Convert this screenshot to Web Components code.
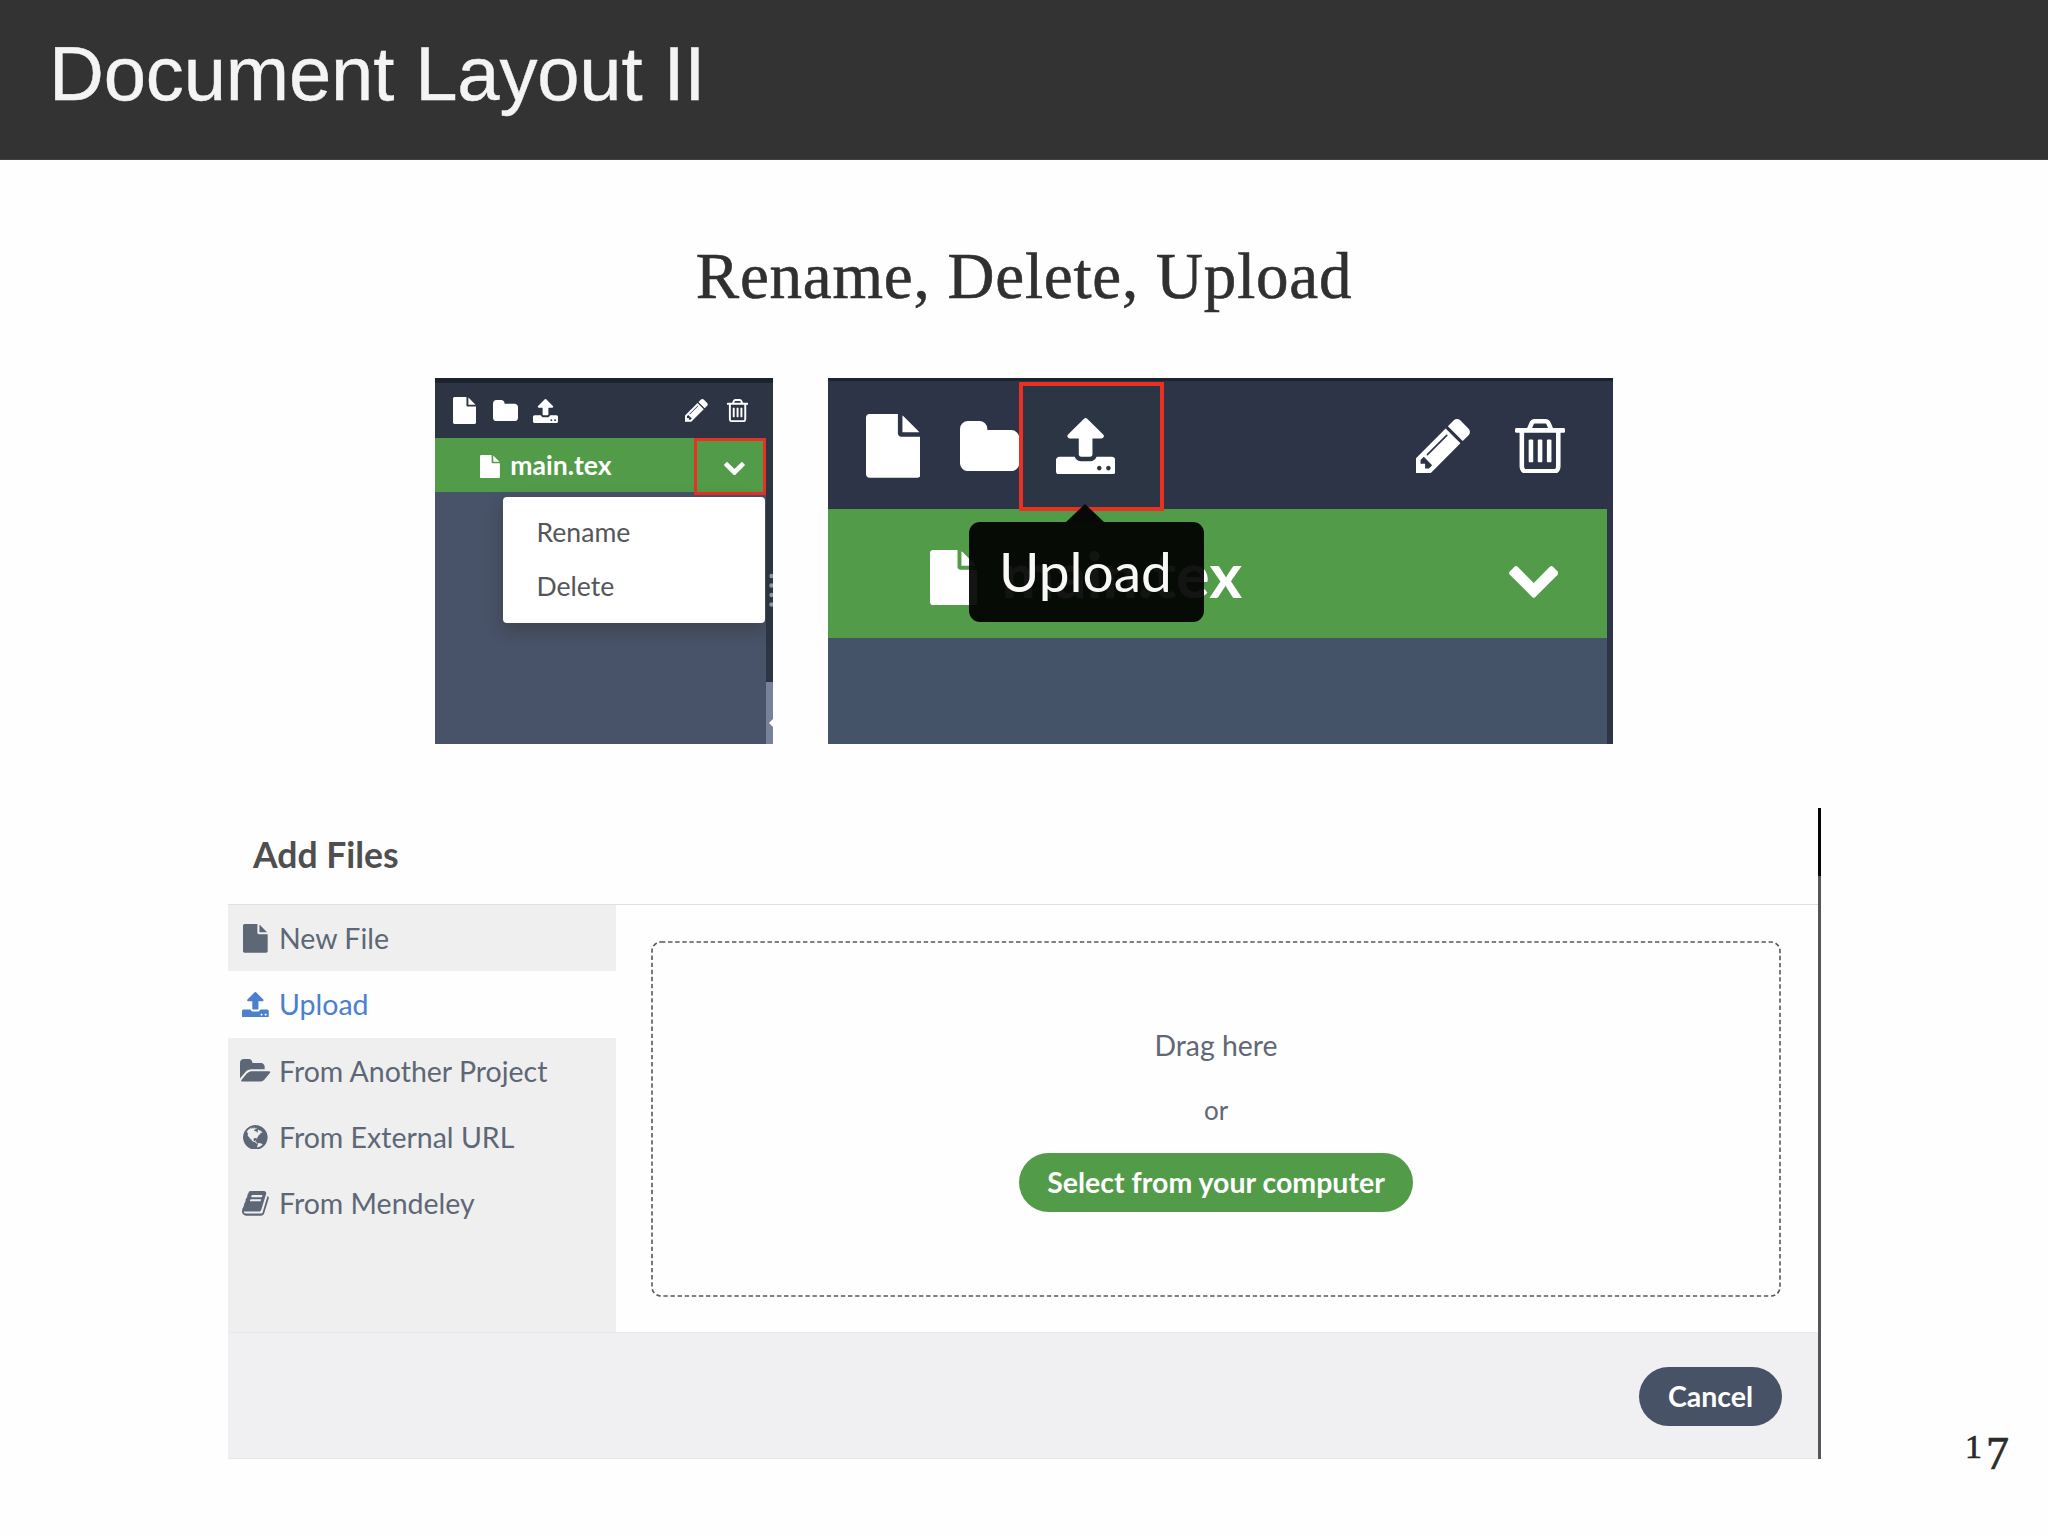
<!DOCTYPE html>
<html lang="en">
<head>
<meta charset="utf-8">
<title>Document Layout II</title>
<style>
  body {
    margin: 0;
    background: #fefefe;
  }
</style>
</head>
<body>
<lecture-slide page="17">
  <span slot="title">Document Layout II</span>
  <span slot="subtitle">Rename, Delete, Upload</span>

  <file-tree slot="figures" class="small" filename="main.tex">
    <context-menu slot="menu">
      <span>Rename</span>
      <span>Delete</span>
    </context-menu>
  </file-tree>
  <file-tree slot="figures" class="large" filename="main.tex">
    <tool-tip slot="tip">Upload</tool-tip>
  </file-tree>

  <add-files-dialog slot="dialog" heading="Add Files">
    <source-item slot="source" icon="file">New File</source-item>
    <source-item slot="source" icon="upload" active>Upload</source-item>
    <source-item slot="source" icon="folder-open">From Another Project</source-item>
    <source-item slot="source" icon="globe">From External URL</source-item>
    <source-item slot="source" icon="book">From Mendeley</source-item>
    <drop-zone></drop-zone>
    <pill-button slot="actions" class="cancel">Cancel</pill-button>
  </add-files-dialog>
</lecture-slide>

<script>
// Each icon is [viewBox, path], the viewBox being the tight box of the glyph
const ICONS = {
  'file': ['128 0 1536 1792', 'M1152 512v-472q22 14 36 28l408 408q14 14 28 36h-472zm-128 32q0 40 28 68t68 28h544v1056q0 40-28 68t-68 28h-1344q-40 0-68-28t-28-68v-1600q0-40 28-68t68-28h800v544z'],
  'folder': ['64 128 1664 1408', 'M1728 608v704q0 92-66 158t-158 66h-1216q-92 0-158-66t-66-158v-960q0-92 66-158t158-66h320q92 0 158 66t66 158v32h672q92 0 158 66t66 158z'],
  'folder-open': ['0 128 1879 1408', 'M1879 952q0 31-31 66l-336 396q-43 51-120.5 86.5t-143.5 35.5h-1088q-34 0-60.5-13t-26.5-43q0-31 31-66l336-396q43-51 120.5-86.5t143.5-35.5h1088q34 0 60.5 13t26.5 43zm-343-344v160h-832q-94 0-197 47.5t-164 119.5l-337 396-5 6q0-4-.5-12.5t-.5-12.5v-960q0-92 66-158t158-66h320q92 0 158 66t66 158v32h544q92 0 158 66t66 158z'],
  'upload': ['64 64 1664 1600', 'M1344 1472q0-26-19-45t-45-19-45 19-19 45 19 45 45 19 45-19 19-45zm256 0q0-26-19-45t-45-19-45 19-19 45 19 45 45 19 45-19 19-45zm128-224v320q0 40-28 68t-68 28h-1472q-40 0-68-28t-28-68v-320q0-40 28-68t68-28h427q21 56 70.5 92t110.5 36h256q61 0 110.5-36t70.5-92h427q40 0 68 28t28 68zm-325-648q-17 40-59 40h-256v448q0 26-19 45t-45 19h-256q-26 0-45-19t-19-45v-448h-256q-42 0-59-40-17-39 14-69l448-448q18-19 45-19t45 19l448 448q31 30 14 69z'],
  'pencil': ['128 149 1515 1515', 'M491 1536l91-91-235-235-91 91v107h128v128h107zm523-928q0-22-22-22-10 0-17 7l-542 542q-7 7-7 17 0 22 22 22 10 0 17-7l542-542q7-7 7-17zm-54-192l416 416-832 832h-416v-416zm683 96q0 53-37 90l-166 166-416-416 166-165q36-38 90-38 53 0 91 38l235 234q37 39 37 91z'],
  'trash': ['192 128 1408 1536', 'M704 736v576q0 14-9 23t-23 9h-64q-14 0-23-9t-9-23v-576q0-14 9-23t23-9h64q14 0 23 9t9 23zm256 0v576q0 14-9 23t-23 9h-64q-14 0-23-9t-9-23v-576q0-14 9-23t23-9h64q14 0 23 9t9 23zm256 0v576q0 14-9 23t-23 9h-64q-14 0-23-9t-9-23v-576q0-14 9-23t23-9h64q14 0 23 9t9 23zm128 724v-948h-896v948q0 22 7 40.5t14.5 27 10.5 8.5h832q3 0 10.5-8.5t14.5-27 7-40.5zm-672-1076h448l-48-117q-7-9-17-11h-317q-10 2-17 11zm928 32v64q0 14-9 23t-23 9h-96v948q0 83-47 143.5t-113 60.5h-832q-66 0-113-58.5t-47-141.5v-952h-96q-14 0-23-9t-9-23v-64q0-14 9-23t23-9h309l70-167q15-37 54-63t79-26h320q40 0 79 26t54 63l70 167h309q14 0 23 9t9 23z'],
  'chevron-down': ['90 533 1612 1035', 'M1683 808l-742 741q-19 19-45 19t-45-19l-742-741q-19-19-19-45.5t19-45.5l166-165q19-19 45-19t45 19l531 531 531-531q19-19 45-19t45 19l166 165q19 19 19 45.5t-19 45.5z'],
  'globe': ['128 128 1536 1536', 'M896 128q209 0 385.5 103t279.5 279.5 103 385.5-103 385.5-279.5 279.5-385.5 103-385.5-103-279.5-279.5-103-385.5 103-385.5 279.5-279.5 385.5-103zm274 521q-2 1-9.5 9.5t-13.5 9.5q2 0 4.5-5t5-11 3.5-7q6-7 22-15 14-6 52-12 34-8 51 11-2-2 9.5-13t14.5-12q3-2 15-4.5t15-7.5l2-22q-12 1-17.5-7t-6.5-21q0 2-6 8 0-7-4.5-8t-11.5 1-9 1q-10-3-15-7.5t-8-16.5-4-15q-2-5-9.5-11t-9.5-10q-1-2-2.5-5.5t-3-6.5-4-5.5-5.5-2.5-7 5-7.5 10-4.5 5q-3-2-6-1.5t-4.5 1-4.5 3-5 3.5q-3 2-8.5 3t-8.5 2q15-5-1-11-10-4-16-3 9-4 7.5-12t-8.5-14h5q-1-4-8.5-8.5t-17.5-8.5-13-6q-8-5-34-9.5t-33-.5q-5 6-4.5 10.5t4 14 3.5 12.5q1 6-5.5 13t-6.5 12q0 7 14 15.5t10 21.5q-3 8-16 16t-16 12q-5 8-1.5 18.5t10.5 16.5q2 2 1.5 4t-3.5 4.5-5.5 4-6.5 3.5l-3 2q-11 5-20.5-6t-13.5-26q-7-25-16-30-23-8-29 1-5-13-41-26-25-9-58-4 6-1 0-15-7-15-19-12 3-6 4-17.5t1-13.5q3-13 12-23 1-1 7-8.5t9.5-13.5.5-6q35 4 50-11 5-5 11.5-17t10.5-17q9-6 14-5.5t14.5 5.5 14.5 5q14 1 15.5-11t-7.5-20q12 1 3-17-4-7-8-9-12-4-27 5-8 4 2 8-1-1-9.5 10.5t-16.5 17.5-16-5q-1-1-5.5-13.5t-9.5-13.5q-8 0-16 15 3-8-11-15t-24-8q19-12-8-27-7-4-20.5-5t-19.5 4q-5 7-5.5 11.5t5 8 10.5 5.5 11.5 4 8.5 3q14 10 8 14-2 1-8.5 3.5t-11.5 4.5-6 4q-3 4 0 14t-2 14q-5-5-9-17.5t-7-16.5q7 9-25 6l-10-1q-4 0-16 2t-20.5 1-13.5-8q-4-8 0-20 1-4 4-2-4-3-11-9.5t-10-8.5q-46 15-94 41 6 1 12-1 5-2 13-6.5t10-5.5q34-14 42-7l5-5q14 16 20 25-7-4-30-1-20 6-22 12 7 12 5 18-4-3-11.5-10t-14.5-11-15-5q-16 0-22 1-146 80-235 222 7 7 12 8 4 1 5 9t2.5 11 11.5-3q9 8 3 19 1-1 44 27 19 17 21 21 3 11-10 18-1-2-9-9t-9-4q-3 5 .5 18.5t10.5 12.5q-7 0-9.5 16t-2.5 35.5-1 23.5l2 1q-3 12 5.5 34.5t21.5 19.5q-13 3 20 43 6 8 8 9 3 2 12 7.5t15 10 10 10.5q4 5 10 22.5t14 23.5q-2 6 9.5 20t10.5 23q-1 0-2.5 1t-2.5 1q3 7 15.5 14t15.5 13q1 3 2 10t3 11 8 2q2-20-24-62-15-25-17-29-3-5-5.5-15.5t-4.5-14.5q2 0 6 1.5t8.5 3.5 7.5 4 2 3q-3 7 2 17.5t12 18.5 17 19 12 13q6 6 14 19.5t0 13.5q9 0 20 10t17 20q5 8 8 26t5 24q2 7 8.5 13.5t12.5 9.5l16 8 13 7q5 2 18.5 10.5t21.5 11.5q10 4 16 4t14.5-2.5 13.5-3.5q15-2 29 15t21 21q36 19 55 11-2 1 .5 7.5t8 15.5 9 14.5 5.5 8.5q5 6 18 15t18 15q6-4 7-9-3 8 7 20t18 10q14-3 14-32-31 15-49-18 0-1-2.5-5.5t-4-8.5-2.5-8.5 0-7.5 5-3q9 0 10-3.5t-2-12.5-4-13q-1-8-11-20t-12-15q-5 9-16 8t-16-9q0 1-1.5 5.5t-1.5 6.5q-13 0-15-1 1-3 2.5-17.5t3.5-22.5q1-4 5.5-12t7.5-14.5 4-12.5-4.5-9.5-17.5-2.5q-19 1-26 20-1 3-3 10.5t-5 11.5-9 7q-7 3-24 2t-24-5q-13-8-22.5-29t-9.5-37q0-10 2.5-26.5t3-25-5.5-24.5q3-2 9-9.5t10-10.5q2-1 4.5-1.5t4.5 0 4-1.5 3-6q-1-1-4-3-3-3-4-3 7 3 28.5-1.5t27.5 1.5q15 11 22-2 0-1-2.5-9.5t-.5-13.5q5 27 29 9 3 3 15.5 5t17.5 5q3 2 7 5.5t5.5 4.5 5-.5 8.5-6.5q10 14 12 24 11 40 19 44 7 3 11 2t4.5-9.5 0-14-1.5-12.5l-1-8v-18l-1-8q-15-3-18.5-12t1.5-18.5 15-18.5q1-1 8-3.5t15.5-6.5 12.5-8q21-19 15-35 7 0 11-9-1 0-5-3t-7.5-5-4.5-2q9-5 2-16 5-3 7.5-11t7.5-10q9 12 21 2 7-8 1-16 5-7 20.5-10.5t18.5-9.5q7 2 8-2t1-12 3-12q4-5 15-9t13-5l17-11q3-4 0-4 18 2 31-11 10-11-6-20 3-6-3-9.5t-15-5.5q3-1 11.5-.5t10.5-1.5q15-10-7-16-17-5-43 12zm-163 877q206-36 351-189-3-3-12.5-4.5t-12.5-3.5q-18-7-24-8 1-7-2.5-13t-8-9-12.5-8-11-7q-2-2-7-6t-7-5.5-7.5-4.5-8.5-2-10 1l-3 1q-3 1-5.5 2.5t-5.5 3-4 3 0 2.5q-21-17-36-22-5-1-11-5.5t-10.5-7-10-1.5-11.5 7q-5 5-6 15t-2 13q-7-5 0-17.5t2-18.5q-3-6-10.5-4.5t-12 4.5-11.5 8.5-9 6.5-8.5 5.5-8.5 7.5q-3 4-6 12t-5 11q-2-4-11.5-6.5t-9.5-5.5q2 10 4 35t5 38q7 31-12 48-27 25-29 40-4 22 12 26 0 7-8 20.5t-7 21.5q0 6 2 16z'],
  'book': ['64 128 1664 1536', 'M1703 478q40 57 18 129l-275 906q-19 64-76.5 107.5t-122.5 43.5h-923q-77 0-148.5-53.5t-99.5-131.5q-24-67-2-127 0-4 3-27t4-37q1-8-3-21.5t-3-19.5q2-11 8-21t16.5-23.5 16.5-23.5q23-38 45-91.5t30-91.5q3-10 .5-30t-.5-28q3-11 17-28t17-23q21-36 42-92t25-90q1-9-2.5-32t.5-28q4-13 22-30.5t22-22.5q19-26 42.5-84.5t27.5-96.5q1-8-3-25.5t-2-26.5q2-8 9-18t18-23 17-21q8-12 16.5-30.5t15-35 16-36 19.5-32 26.5-23.5 36-11.5 47.5 5.5l-1 3q38-9 51-9h761q74 0 114 56t18 130l-274 906q-36 119-71.5 153.5t-128.5 34.5h-869q-27 0-38 15-11 16-1 43 24 70 144 70h923q29 0 56-15.5t35-41.5l300-987q7-22 5-57 38 15 59 43zm-1064 2q-4 13 2 22.5t20 9.5h608q13 0 25.5-9.5t16.5-22.5l21-64q4-13-2-22.5t-20-9.5h-608q-13 0-25.5 9.5t-16.5 22.5zm-83 256q-4 13 2 22.5t20 9.5h608q13 0 25.5-9.5t16.5-22.5l21-64q4-13-2-22.5t-20-9.5h-608q-13 0-25.5 9.5t-16.5 22.5z'],
};

// Icon sized in glyph units: one em is 1792 units
class GlyphIcon extends HTMLElement {
  constructor() {
    super();
    this.attachShadow({ mode: 'open' });
  }

  connectedCallback() {
    const [box, path] = ICONS[this.getAttribute('name')];
    const [, , w, h] = box.split(' ').map(Number);
    this.shadowRoot.innerHTML = `
      <style>
        :host { display: block; flex: none; }
        svg {
          display: block;
          width: ${w / 1792}em;
          height: ${h / 1792}em;
          fill: currentColor;
        }
      </style>
      <svg viewBox="${box}"><path d="${path}"/></svg>
    `;
  }
}

class LectureSlide extends HTMLElement {
  constructor() {
    super();
    this.attachShadow({ mode: 'open' });
  }

  connectedCallback() {
    const [first, second] = this.getAttribute('page');
    this.shadowRoot.innerHTML = `
      <style>
        :host {
          display: flex;
          flex-direction: column;
          position: relative;
          width: 2048px;
          height: 1536px;
          overflow: hidden;
        }
        header {
          box-sizing: border-box;
          height: 160px;
          padding-left: 49px;
          background: #333;
          border-bottom: 1px solid #453f43;
          color: #f4f4f4;
          font: 76px/147px "Liberation Sans", sans-serif;
          letter-spacing: -0.15px;
          -webkit-text-stroke: 0.4px;
        }
        h2 {
          margin: 66px 0 52px;
          color: #303030;
          text-align: center;
          font: 65px/100px "Liberation Serif", serif;
          letter-spacing: 0.8px;
          -webkit-text-stroke: 0.6px;
        }
        .figures {
          display: flex;
          justify-content: center;
          gap: 55px;
          height: 366px;
        }
        .dialog {
          display: flex;
          margin: 64px 227px 0 228px;
        }
        /* old-style figures: the 1 is x-height, the 7 hangs below the line */
        .page {
          position: absolute;
          left: 1965px;
          top: 1427px;
          color: #2b2b2b;
          font: 34px/40px "Liberation Serif", serif;
          -webkit-text-stroke: 0.7px;
        }
        .page span {
          margin-left: 4px;
          font-size: 46px;
          line-height: 20px;
          vertical-align: -11px;
        }
      </style>
      <header><slot name="title"></slot></header>
      <h2><slot name="subtitle"></slot></h2>
      <div class="figures"><slot name="figures"></slot></div>
      <div class="dialog"><slot name="dialog"></slot></div>
      <div class="page">${first}<span>${second}</span></div>
    `;
  }
}

class FileTree extends HTMLElement {
  constructor() {
    super();
    this.attachShadow({ mode: 'open' });
  }

  connectedCallback() {
    this.shadowRoot.innerHTML = `
      <style>
        :host {
          --u: 1px;
          display: flex;
          position: relative;
          flex: none;
          width: 785px;
          overflow: hidden;
          color: #fff;
          background: #2e3447;
          font-family: Lato, sans-serif;
        }
        :host(.small) {
          --u: 0.422px;
          width: 338px;
          background: #2d3545;
        }
        .tree {
          flex: 1;
          display: flex;
          flex-direction: column;
        }
        .toolbar {
          display: flex;
          align-items: center;
          box-sizing: border-box;
          height: 131px;
          border-top: 3px solid #1c232d;
          padding: 2px 42px 0 37.5px;
          font-size: calc(var(--u) * 63.8);
        }
        :host(.small) .toolbar {
          height: 59.5px;
          border-top-width: 5px;
          padding: 1px 18px 0;
        }
        .toolbar .folder { margin: 0 calc(var(--u) * 37.4) 0 calc(var(--u) * 39.4); }
        .toolbar .pencil { margin: 0 calc(var(--u) * 45) 0 auto; }
        .row {
          display: flex;
          align-items: center;
          box-sizing: border-box;
          height: 128.5px;
          padding: 0 49px 0 102px;
          background: #529b48;
          font-size: calc(var(--u) * 63);
          font-weight: 700;
        }
        :host(.small) .row {
          height: 54.5px;
          padding: 0 21px 0 45px;
        }
        .row glyph-icon { font-size: calc(var(--u) * 55); margin-top: calc(var(--u) * 8); }
        .row .chevron { margin: calc(var(--u) * 18) 0 0 auto; }
        .row .name { margin-left: calc(var(--u) * 24.5); }
        .body { flex: 1; background: #455369; }
        :host(.small) .body { background: #485268; }
        .edge {
          display: flex;
          flex-direction: column;
          border-top: 3px solid #1c232d;
          width: 6px;
        }
        :host(.small) .edge { width: 7px; border-top-width: 5px; }
        .edge svg { display: none; }
        :host(.small) .edge svg { display: block; }
        /* red frames drawn over the control being explained */
        .frame {
          position: absolute;
          box-sizing: border-box;
          left: 191px;
          top: 4px;
          width: 145px;
          height: 129px;
          border: 4px solid #ea3022;
        }
        :host(.large) .frame { background: rgba(40, 58, 64, 0.35); background-clip: padding-box; z-index: 0; }
        :host(.large) .toolbar glyph-icon { position: relative; z-index: 1; }
        :host(.small) .frame {
          left: 258.5px;
          top: 60px;
          width: 72.5px;
          height: 57px;
          border-width: 3px;
        }
        ::slotted([slot="menu"]) { position: absolute; left: 68px; top: 119px; }
        ::slotted([slot="tip"]) { position: absolute; left: 141px; top: 144px; z-index: 2; }
      </style>
      <div class="tree">
        <div class="toolbar">
          <glyph-icon name="file"></glyph-icon>
          <glyph-icon name="folder" class="folder"></glyph-icon>
          <glyph-icon name="upload"></glyph-icon>
          <glyph-icon name="pencil" class="pencil"></glyph-icon>
          <glyph-icon name="trash"></glyph-icon>
        </div>
        <div class="row">
          <glyph-icon name="file"></glyph-icon>
          <span class="name">${this.getAttribute('filename')}</span>
          <glyph-icon name="chevron-down" class="chevron"></glyph-icon>
        </div>
        <div class="body"></div>
      </div>
      <div class="edge">
        <svg width="7" height="361" viewBox="0 5 7 361">
          <g fill="#9aa3b3">
            <circle cx="5.5" cy="198" r="2.2"/>
            <circle cx="5.5" cy="207.500" r="2.2"/>
            <circle cx="5.5" cy="217" r="2.2"/>
            <circle cx="5.5" cy="226.500" r="2.2"/>
          </g>
          <rect y="304" width="7" height="62" fill="#76829a"/>
          <path d="M3 345l4-4v8z" fill="#fff"/>
        </svg>
      </div>
      <div class="frame"></div>
      <slot name="menu"></slot>
      <slot name="tip"></slot>
    `;
  }
}

class ContextMenu extends HTMLElement {
  constructor() {
    super();
    this.attachShadow({ mode: 'open' });
  }

  connectedCallback() {
    this.shadowRoot.innerHTML = `
      <style>
        :host {
          display: flex;
          flex-direction: column;
          box-sizing: border-box;
          width: 262px;
          height: 125.5px;
          padding: 8px 0 0 33.5px;
          border-radius: 4px;
          background: #fff;
          box-shadow: 0 7px 16px rgba(50, 50, 40, 0.4);
          color: #55565a;
          font: 26.6px/54px Lato, sans-serif;
        }
      </style>
      <slot></slot>
    `;
  }
}

class ToolTip extends HTMLElement {
  constructor() {
    super();
    this.attachShadow({ mode: 'open' });
  }

  connectedCallback() {
    this.shadowRoot.innerHTML = `
      <style>
        :host {
          box-sizing: border-box;
          width: 235px;
          height: 100px;
          border-radius: 11px;
          background: rgba(0, 0, 0, 0.92);
          color: #f8f8f6;
          text-align: center;
          font: 55px/98px Lato, sans-serif;
          text-indent: -2px;
        }
        .arrow {
          position: absolute;
          left: 97px;
          top: -18px;
          border: 19px solid transparent;
          border-top: 0;
          border-bottom: 18px solid #060906;
        }
      </style>
      <div class="arrow"></div>
      <slot></slot>
    `;
  }
}

class AddFilesDialog extends HTMLElement {
  constructor() {
    super();
    this.attachShadow({ mode: 'open' });
  }

  connectedCallback() {
    this.shadowRoot.innerHTML = `
      <style>
        :host {
          display: flex;
          width: 1592.5px;
          height: 651px;
          font-family: Lato, sans-serif;
        }
        .panel {
          flex: 1;
          display: flex;
          flex-direction: column;
        }
        .heading {
          height: 96px;
          padding-left: 25px;
          border-bottom: 1px solid #e0e0e3;
          color: #4f4f50;
          font-size: 35.5px;
          font-weight: 700;
          line-height: 93px;
        }
        .content { display: flex; height: 427px; }
        nav {
          width: 388px;
          background: #efeff0;
        }
        main {
          flex: 1;
          display: flex;
          padding: 36px 36.5px 35px 35px;
        }
        footer {
          flex: 1;
          display: flex;
          align-items: center;
          justify-content: flex-end;
          box-sizing: border-box;
          padding: 2px 35.5px 0 0;
          background: #f0eff1;
          border-top: 1px solid #e9e9eb;
          border-bottom: 1px solid #e8e8ea;
        }
        .edge {
          width: 3px;
          background: linear-gradient(#050505 68px, #55555a 68px);
        }
      </style>
      <div class="panel">
        <div class="heading">${this.getAttribute('heading')}</div>
        <div class="content">
          <nav><slot name="source"></slot></nav>
          <main><slot></slot></main>
        </div>
        <footer><slot name="actions"></slot></footer>
      </div>
      <div class="edge"></div>
    `;
  }
}

class SourceItem extends HTMLElement {
  constructor() {
    super();
    this.attachShadow({ mode: 'open' });
  }

  connectedCallback() {
    this.shadowRoot.innerHTML = `
      <style>
        :host {
          display: flex;
          align-items: center;
          height: 66.3px;
          color: #5e6776;
          font-size: 28.5px;
        }
        :host([active]) {
          background: #fefefe;
          color: #4a80ce;
        }
        .icon {
          display: flex;
          justify-content: center;
          width: 30px;
          margin: 0 8.5px 0 12.5px;
          font-size: 28.8px;
        }
      </style>
      <div class="icon"><glyph-icon name="${this.getAttribute('icon')}"></glyph-icon></div>
      <slot></slot>
    `;
  }
}

class DropZone extends HTMLElement {
  constructor() {
    super();
    this.attachShadow({ mode: 'open' });
  }

  connectedCallback() {
    this.shadowRoot.innerHTML = `
      <style>
        :host {
          display: grid;
          flex: 1;
          color: #616874;
          font-size: 28.4px;
          line-height: 34px;
        }
        svg, .inner { grid-area: 1 / 1; }
        svg { width: 100%; height: 100%; }
        rect {
          x: 1px;
          y: 1px;
          width: calc(100% - 2px);
          height: calc(100% - 2px);
          fill: none;
          stroke: #58585c;
          stroke-width: 1.6;
          stroke-dasharray: 4.4 2.7;
        }
        .inner {
          display: flex;
          flex-direction: column;
          align-items: center;
          padding-top: 87px;
        }
        .or { margin: 31px 0 26px; font-size: 26px; }
      </style>
      <svg><rect rx="9"/></svg>
      <div class="inner">
        <div>Drag here</div>
        <div class="or">or</div>
        <pill-button>Select from your computer</pill-button>
      </div>
    `;
  }
}

class PillButton extends HTMLElement {
  constructor() {
    super();
    this.attachShadow({ mode: 'open' });
  }

  connectedCallback() {
    this.shadowRoot.innerHTML = `
      <style>
        :host {
          display: block;
          box-sizing: border-box;
          width: 394px;
          border-radius: 30px;
          background: #529b48;
          color: #fff;
          text-align: center;
          font: 700 28.5px/59px Lato, sans-serif;
        }
        :host(.cancel) {
          width: 143px;
          background: #475266;
        }
      </style>
      <slot></slot>
    `;
  }
}

customElements.define('glyph-icon', GlyphIcon);
customElements.define('lecture-slide', LectureSlide);
customElements.define('file-tree', FileTree);
customElements.define('context-menu', ContextMenu);
customElements.define('tool-tip', ToolTip);
customElements.define('add-files-dialog', AddFilesDialog);
customElements.define('source-item', SourceItem);
customElements.define('drop-zone', DropZone);
customElements.define('pill-button', PillButton);
</script>
</body>
</html>
